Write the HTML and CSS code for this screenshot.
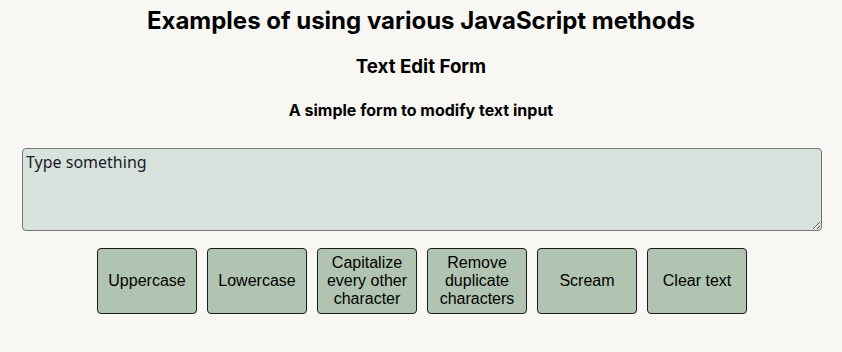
FILE: index.html
```html
<!DOCTYPE html>
<html>
<head>
<meta charset="utf-8">
<link rel="stylesheet" href="styles.css">
</head>
<body>
<main class="page">
  <h1 class="title">Examples of using various JavaScript methods</h1>
  <h2 class="subtitle">Text Edit Form</h2>
  <h3 class="desc">A simple form to modify text input</h3>
  <textarea class="input" placeholder="Type something"></textarea>
  <div class="buttons">
    <button class="btn">Uppercase</button>
    <button class="btn">Lowercase</button>
    <button class="btn">Capitalize every other character</button>
    <button class="btn">Remove duplicate characters</button>
    <button class="btn">Scream</button>
    <button class="btn">Clear text</button>
  </div>
</main>
</body>
</html>
```
FILE: styles.css
```css
html, body {
  margin: 0;
  padding: 0;
  background: #f8f7f4;
}
.page {
  display: flex;
  flex-direction: column;
  align-items: center;
  font-family: Inter, "Liberation Sans", sans-serif;
  color: #000;
}
.title {
  font-size: 24px;
  font-weight: 700;
  margin: 6px 0 0;
  line-height: 29px;
}
.subtitle {
  font-size: 18.72px;
  font-weight: 700;
  margin: 20px 0 0;
  line-height: 23px;
}
.desc {
  font-size: 16px;
  font-weight: 700;
  margin: 22px 0 0;
  line-height: 20px;
}
.input {
  box-sizing: border-box;
  width: 800px;
  height: 83px;
  margin: 28px 0 0 2px;
  padding: 2px 3px;
  background: #d8e2dc;
  border: 1px solid #767676;
  border-radius: 4px;
  font-family: "Noto Sans", sans-serif;
  font-size: 16px;
  color: #000;
}
.input::placeholder {
  color: #1a1a2a;
  opacity: 1;
}
.buttons {
  display: flex;
  gap: 10px;
  margin-top: 17px;
  margin-left: 2px;
}
.btn {
  box-sizing: border-box;
  width: 100px;
  height: 66px;
  padding: 0 4px;
  background: #b0c4b1;
  border: 1px solid #1c1c1c;
  border-radius: 4px;
  font-family: "Liberation Sans", Arial, sans-serif;
  font-size: 16px;
  line-height: 18px;
  color: #000;
}
```
